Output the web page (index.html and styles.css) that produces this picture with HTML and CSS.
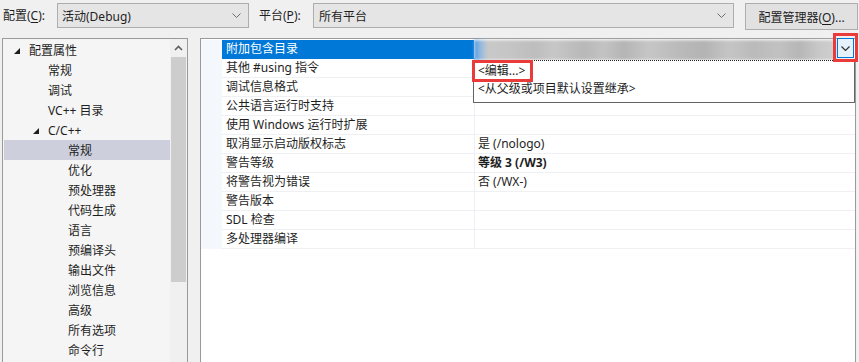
FILE: index.html
```html
<!DOCTYPE html>
<html lang="zh-CN">
<head>
    <meta charset="UTF-8">
    <title>属性页</title>
    <link rel="stylesheet" href="styles.css">
</head>
<body>
    <div class="toolbar">
        <label class="field-label">配置(<u>C</u>):</label>
        <div class="combo combo-config">
            <span>活动(Debug)</span>
            <svg class="chev" width="9" height="5" viewBox="0 0 9 5"><path d="M0.5 0.5 L4.5 4.5 L8.5 0.5" fill="none" stroke="#6d6d6d" stroke-width="1"/></svg>
        </div>
        <label class="field-label platform-label">平台(<u>P</u>):</label>
        <div class="combo combo-platform">
            <span>所有平台</span>
            <svg class="chev" width="9" height="5" viewBox="0 0 9 5"><path d="M0.5 0.5 L4.5 4.5 L8.5 0.5" fill="none" stroke="#6d6d6d" stroke-width="1"/></svg>
        </div>
        <button class="btn">配置管理器(<u>O</u>)...</button>
    </div>

    <div class="main">
        <div class="tree-panel">
            <ul class="tree">
                <li class="lvl1"><svg class="tri" width="6" height="6" viewBox="0 0 6 6"><polygon points="6,0 6,6 0,6" fill="#1e1e1e"/></svg>配置属性</li>
                <li class="lvl2">常规</li>
                <li class="lvl2">调试</li>
                <li class="lvl2">VC++ 目录</li>
                <li class="lvl2 open"><svg class="tri" width="6" height="6" viewBox="0 0 6 6"><polygon points="6,0 6,6 0,6" fill="#1e1e1e"/></svg>C/C++</li>
                <li class="lvl3 selected">常规</li>
                <li class="lvl3">优化</li>
                <li class="lvl3">预处理器</li>
                <li class="lvl3">代码生成</li>
                <li class="lvl3">语言</li>
                <li class="lvl3">预编译头</li>
                <li class="lvl3">输出文件</li>
                <li class="lvl3">浏览信息</li>
                <li class="lvl3">高级</li>
                <li class="lvl3">所有选项</li>
                <li class="lvl3">命令行</li>
            </ul>
            <div class="vscroll">
                <div class="arrow-up">
                    <svg width="9" height="6" viewBox="0 0 9 6"><path d="M1 5 L4.5 1.5 L8 5" fill="none" stroke="#606060" stroke-width="1.6"/></svg>
                </div>
                <div class="thumb"></div>
            </div>
        </div>

        <div class="grid-panel">
            <div class="grid">
                <div class="row selected"><div class="gutter"></div><div class="name">附加包含目录</div><div class="value"></div></div>
                <div class="row"><div class="gutter"></div><div class="name">其他 #using 指令</div><div class="value"></div></div>
                <div class="row"><div class="gutter"></div><div class="name">调试信息格式</div><div class="value"></div></div>
                <div class="row"><div class="gutter"></div><div class="name">公共语言运行时支持</div><div class="value"></div></div>
                <div class="row"><div class="gutter"></div><div class="name">使用 Windows 运行时扩展</div><div class="value"></div></div>
                <div class="row"><div class="gutter"></div><div class="name">取消显示启动版权标志</div><div class="value">是 (/nologo)</div></div>
                <div class="row"><div class="gutter"></div><div class="name">警告等级</div><div class="value bold">等级 3 (/W3)</div></div>
                <div class="row"><div class="gutter"></div><div class="name">将警告视为错误</div><div class="value">否 (/WX-)</div></div>
                <div class="row"><div class="gutter"></div><div class="name">警告版本</div><div class="value"></div></div>
                <div class="row"><div class="gutter"></div><div class="name">SDL 检查</div><div class="value"></div></div>
                <div class="row"><div class="gutter"></div><div class="name">多处理器编译</div><div class="value"></div></div>
            </div>

            <div class="edit-blur"></div>
            <div class="drop-btn">
                <svg width="9" height="5" viewBox="0 0 9 5"><path d="M0.5 0.5 L4.5 4.5 L8.5 0.5" fill="none" stroke="#333" stroke-width="1.2"/></svg>
            </div>
            <div class="drop-list">
                <div class="drop-focus"></div>
                <div class="drop-item">&lt;编辑...&gt;</div>
                <div class="drop-item">&lt;从父级或项目默认设置继承&gt;</div>
            </div>
            <div class="mark mark-btn"></div>
            <div class="mark mark-edit"></div>
        </div>
    </div>
</body>
</html>
```

FILE: styles.css
```css
body { margin: 0; width: 859px; height: 362px; overflow: hidden; background: #f0f0f0; color: #1e1e1e; font-family: "Noto Sans", "Noto Sans CJK SC", sans-serif; font-size: 12px; }
u { text-decoration: underline; text-underline-offset: 2px; }

/* top bar */
.toolbar { display: flex; align-items: flex-start; height: 38px; padding: 3px 0 0 3px; box-sizing: border-box; }
.field-label { width: 54px; line-height: 25px; }
.platform-label { margin-left: 10px; }
.combo { display: flex; align-items: center; justify-content: space-between; height: 25px; box-sizing: border-box; border: 1px solid #adadad; background: #e5e5e5; padding: 0 7px 0 4px; }
.combo-config { width: 192px; }
.combo-platform { width: 421px; padding-left: 5px; }
.btn { margin-left: 11px; width: 113px; height: 27px; border: 1px solid #adadad; background: #e1e1e1; font: inherit; color: #1e1e1e; padding: 0; }

/* main area */
.main { display: flex; padding-left: 2px; }

.tree-panel { display: flex; width: 186px; height: 330px; box-sizing: border-box; border: 1px solid #9a9a9a; border-bottom: none; background: #f5f5f5; }
.tree { list-style: none; margin: 0; padding: 1px 0 0 1px; width: 166px; }
.tree li { display: flex; align-items: center; height: 20px; white-space: nowrap; }
.tree .lvl1 { padding-left: 25px; }
.tree .lvl2 { padding-left: 44px; }
.tree .lvl3 { padding-left: 64px; }
.tree .tri { margin-left: -15px; margin-right: 9px; margin-top: 2px; }
.tree .selected { background: #cdd0dc; }

.vscroll { width: 17px; background: #f0f0f0; display: flex; flex-direction: column; align-items: center; }
.arrow-up { height: 18px; width: 17px; display: flex; align-items: center; justify-content: center; }
.thumb { width: 15px; height: 225px; background: #cdcdcd; }

.grid-panel { position: relative; margin-left: 12px; width: 656px; height: 330px; box-sizing: border-box; border: 1px solid #9a9a9a; border-bottom: none; background: #fff; }
.grid { padding-top: 1px; }
.row { display: flex; height: 19px; }
.gutter { width: 21px; background: #f4f7fc; }
.name, .value { height: 19px; box-sizing: border-box; border-bottom: 1px solid #eef0f4; line-height: 18px; white-space: nowrap; }
.name { width: 253px; padding-left: 4px; border-right: 1px solid #eef0f4; }
.value { flex: 1; padding-left: 3px; }
.bold { font-weight: bold; }
.row.selected .name { background: #0078d7; color: #fff; border-bottom-color: #0078d7; }

/* in-place editor */
.edit-blur { position: absolute; left: 273px; top: 1px; width: 363px; height: 20px; filter: blur(1.5px);
    background: linear-gradient(to right, #4f9ae0 0, #8fb8e0 6px, #c9c9c9 14px, #c4c4c4 40px, #bdbdbd 60px, #c7c7c7 80px, #b8b8b8 110px, #c3c3c3 130px, #b5b5b5 150px, #c6c6c6 175px, #bcbcbc 200px, #b3b3b3 230px, #c5c5c5 255px, #bababa 280px, #c2c2c2 305px, #b6b6b6 325px, #c8c8c8 345px, #d0d0d0 363px); }
.drop-btn { position: absolute; left: 636px; top: -1px; width: 17px; height: 20px; box-sizing: border-box; border: 1px solid #0078d7; background: #e5f1fb; display: flex; align-items: center; justify-content: center; }
.drop-list { position: absolute; left: 272px; top: 21px; width: 382px; height: 43px; box-sizing: border-box; border: 1px solid #646464; border-top: none; background: #fff; }
.drop-focus { height: 1px; margin: 0 1px 0 4px; border-top: 1px dotted #1e1e1e; }
.drop-item { height: 18px; line-height: 18px; padding-left: 4px; white-space: nowrap; }

.mark { position: absolute; border: 3px solid #ea3a3a; box-sizing: border-box; }
.mark-btn { left: 632px; top: -6px; width: 25px; height: 29px; }
.mark-edit { left: 271px; top: 21px; width: 61px; height: 22px; }
```
